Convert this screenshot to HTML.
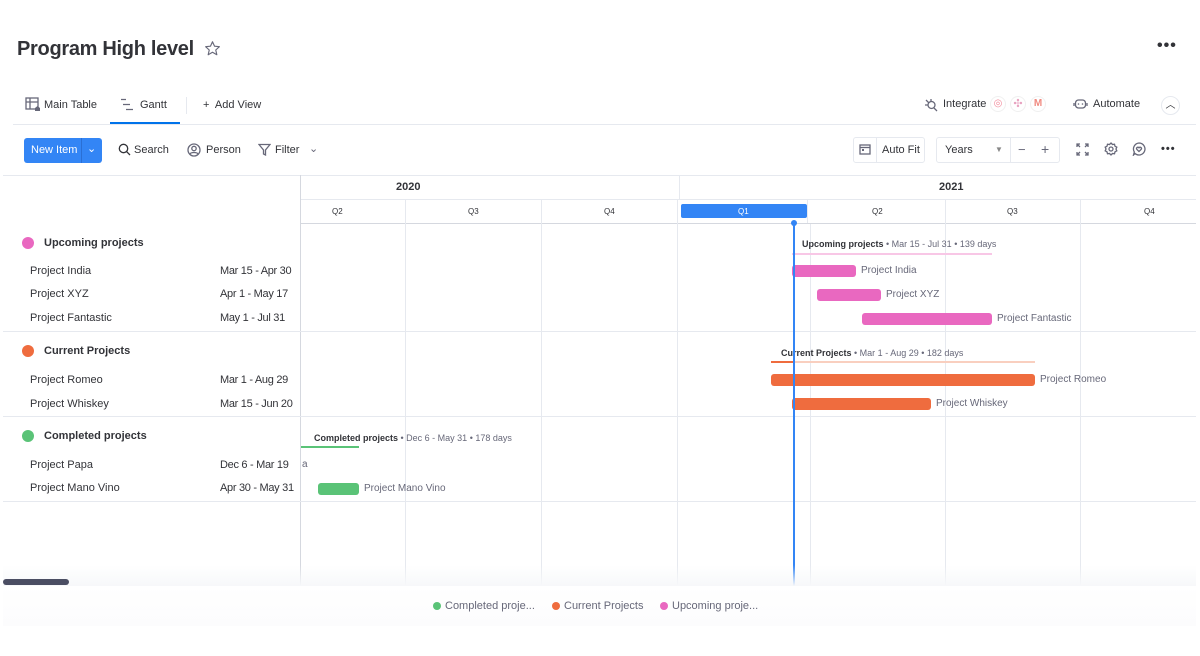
<!DOCTYPE html><html><head><meta charset="utf-8"><style>
*{margin:0;padding:0;box-sizing:border-box}
body{width:1200px;height:656px;background:#fff;font-family:"Liberation Sans",sans-serif;color:#323338;position:relative;overflow:hidden}
.a{position:absolute;white-space:nowrap}
.t{font-size:11px;color:#323338}
.d{letter-spacing:-0.3px}
.g{color:#676879}
.vl{position:absolute;width:1px;background:#e6e9ef}
.hl{position:absolute;height:1px;background:#e6e9ef}
.bar{position:absolute;height:12px;border-radius:3px}
.bl{font-size:10px;color:#676879}
.ic{stroke:#676879;fill:none;stroke-width:1.3}
</style></head><body>
<div class="a" style="left:17px;top:38px;font-size:20px;font-weight:bold;color:#323338;letter-spacing:-0.3px">Program High level</div>
<svg class="a" style="left:204px;top:40px" width="17" height="17" viewBox="0 0 24 24"><path d="M12 2.5l2.9 6.3 6.8.7-5.1 4.6 1.5 6.7L12 17.3l-6.1 3.5 1.5-6.7-5.1-4.6 6.8-.7z" fill="none" stroke="#676879" stroke-width="1.6" stroke-linejoin="round"/></svg>
<div class="a" style="left:1157px;top:37px;font-size:16px;font-weight:bold;letter-spacing:1px;color:#323338">•••</div>

<svg class="a" style="left:25px;top:97px" width="16" height="15" viewBox="0 0 16 15"><rect x="1" y="1" width="12" height="11" class="ic"/><path d="M1 5h12M5 1v11" class="ic"/><path d="M10 14v-3l2.5-2 2.5 2v3z" fill="#676879"/></svg>
<div class="a t" style="left:44px;top:99px">Main Table</div>
<svg class="a" style="left:120px;top:98px" width="14" height="13" viewBox="0 0 14 13"><path d="M1 1.5h5M3 6.5h7M6 11.5h7" class="ic"/></svg>
<div class="a t" style="left:140px;top:99px">Gantt</div>
<div class="a" style="left:110px;top:122px;width:70px;height:2px;background:#0073ea"></div>
<div class="a" style="left:186px;top:97px;width:1px;height:17px;background:#e6e9ef"></div>
<div class="a t" style="left:203px;top:99px">+&nbsp; Add View</div>
<div class="hl" style="left:13px;top:124px;width:1183px"></div>

<svg class="a" style="left:924px;top:98px" width="14" height="14" viewBox="0 0 14 14"><circle cx="7.5" cy="7" r="3.5" class="ic"/><path d="M2 2l3 3M10 10l3 3M1 7h3M7 1v3" class="ic"/></svg>
<div class="a t" style="left:943px;top:98px">Integrate</div>
<div class="a" style="left:990px;top:96px;width:16px;height:16px;border-radius:50%;border:1px solid #f0f0f0;color:#f28b9c;font-size:10px;text-align:center;line-height:14px">◎</div>
<div class="a" style="left:1010px;top:96px;width:16px;height:16px;border-radius:50%;border:1px solid #f0f0f0;color:#e8a3c0;font-size:11px;text-align:center;line-height:14px">✣</div>
<div class="a" style="left:1030px;top:96px;width:16px;height:16px;border-radius:50%;border:1px solid #f0f0f0;color:#f08a80;font-size:10px;text-align:center;line-height:14px;font-weight:bold">M</div>
<svg class="a" style="left:1073px;top:98px" width="15" height="12" viewBox="0 0 15 12"><rect x="2.5" y="2" width="10" height="8" rx="3" class="ic"/><path d="M1 5v3M14 5v3" class="ic"/><circle cx="5.5" cy="6" r=".8" fill="#676879"/><circle cx="9.5" cy="6" r=".8" fill="#676879"/></svg>
<div class="a t" style="left:1093px;top:98px">Automate</div>
<div class="a" style="left:1161px;top:96px;width:19px;height:19px;border-radius:50%;border:1px solid #e6e9ef;font-size:10px;text-align:center;line-height:18px;color:#323338">︿</div>

<div class="a" style="left:24px;top:138px;width:78px;height:25px;border-radius:3px;background:#3385f5"></div>
<div class="a" style="left:31px;top:144px;font-size:11px;color:#fff">New Item</div>
<div class="a" style="left:81px;top:138px;width:1px;height:25px;background:#2a6fd4"></div>
<div class="a" style="left:87px;top:142px;font-size:11px;color:#fff">⌄</div>
<svg class="a" style="left:118px;top:143px" width="13" height="13" viewBox="0 0 13 13"><circle cx="5.5" cy="5.5" r="4.2" stroke="#323338" fill="none" stroke-width="1.3"/><path d="M8.5 8.5l3.5 3.5" stroke="#323338" stroke-width="1.3"/></svg>
<div class="a t" style="left:134px;top:144px">Search</div>
<svg class="a" style="left:187px;top:143px" width="14" height="14" viewBox="0 0 14 14"><circle cx="7" cy="7" r="6" class="ic"/><circle cx="7" cy="5.5" r="2.2" class="ic"/><path d="M3 11c1-2 7-2 8 0" class="ic"/></svg>
<div class="a t" style="left:206px;top:144px">Person</div>
<svg class="a" style="left:258px;top:143px" width="13" height="13" viewBox="0 0 13 13"><path d="M1 1.5h11L7.5 7v5L5.5 11V7z" class="ic"/></svg>
<div class="a t" style="left:275px;top:144px">Filter</div>
<div class="a" style="left:309px;top:142px;font-size:11px;color:#676879">⌄</div>

<div class="a" style="left:853px;top:137px;width:72px;height:26px;border:1px solid #e6e9ef;border-radius:3px"></div>
<div class="a" style="left:876px;top:137px;width:1px;height:26px;background:#e6e9ef"></div>
<svg class="a" style="left:859px;top:143px" width="12" height="12" viewBox="0 0 12 12"><rect x="1" y="2" width="10" height="9" class="ic"/><path d="M1 4.5h10" class="ic"/><rect x="3" y="6" width="2" height="2" fill="#676879"/></svg>
<div class="a t" style="left:882px;top:144px">Auto Fit</div>
<div class="a" style="left:936px;top:137px;width:124px;height:26px;border:1px solid #e6e9ef;border-radius:3px"></div>
<div class="a" style="left:1010px;top:137px;width:1px;height:26px;background:#e6e9ef"></div>
<div class="a t" style="left:945px;top:144px">Years</div>
<div class="a" style="left:995px;top:145px;font-size:8px;color:#888">▼</div>
<div class="a" style="left:1018px;top:142px;font-size:13px;color:#676879">−</div>
<div class="a" style="left:1041px;top:141px;font-size:14px;color:#676879">+</div>
<svg class="a" style="left:1076px;top:143px" width="13" height="13" viewBox="0 0 13 13"><path d="M1 4V1h3M9 1h3v3M12 9v3H9M4 12H1V9M1 1l3 3M12 1L9 4M12 12L9 9M1 12l3-3" class="ic" stroke="#323338"/></svg>
<svg class="a" style="left:1104px;top:142px" width="14" height="14" viewBox="0 0 14 14"><circle cx="7" cy="7" r="2" class="ic"/><path d="M7 1l1.5 1.5 2-.3.5 2 1.8 1L12 7l.8 1.8-1.8 1-.5 2-2-.3L7 13l-1.5-1.5-2 .3-.5-2-1.8-1L2 7l-.8-1.8 1.8-1 .5-2 2 .3z" class="ic"/></svg>
<svg class="a" style="left:1132px;top:142px" width="14" height="14" viewBox="0 0 14 14"><path d="M7 1a6 6 0 1 1-4 10.5L1.5 13l.8-3A6 6 0 0 1 7 1z" class="ic"/><path d="M7 9.5L4.8 7.3a1.3 1.3 0 0 1 2.2-1.5 1.3 1.3 0 0 1 2.2 1.5z" class="ic"/></svg>
<div class="a" style="left:1161px;top:143px;font-size:11px;font-weight:bold;letter-spacing:1px;color:#323338">•••</div>

<div class="hl" style="left:3px;top:175px;width:1193px"></div>
<div class="vl" style="left:300px;top:175px;height:411px;background:#d5d8df"></div>
<div class="hl" style="left:301px;top:199px;width:895px"></div>
<div class="hl" style="left:301px;top:223px;width:895px;background:#d5d8df"></div>
<div class="vl" style="left:679px;top:175px;height:24px"></div>
<div class="a" style="left:396px;top:181px;font-size:11px;font-weight:bold">2020</div>
<div class="a" style="left:939px;top:181px;font-size:11px;font-weight:bold">2021</div>
<div class="a" style="left:681px;top:204px;width:126px;height:14px;background:#3385f5;border-radius:2px"></div>
<div class="a" style="left:332px;top:207px;font-size:8px">Q2</div>
<div class="a" style="left:468px;top:207px;font-size:8px">Q3</div>
<div class="a" style="left:604px;top:207px;font-size:8px">Q4</div>
<div class="a" style="left:738px;top:207px;font-size:8px;color:#fff">Q1</div>
<div class="a" style="left:872px;top:207px;font-size:8px">Q2</div>
<div class="a" style="left:1007px;top:207px;font-size:8px">Q3</div>
<div class="a" style="left:1144px;top:207px;font-size:8px">Q4</div>
<div class="vl" style="left:405px;top:199px;height:387px"></div>
<div class="vl" style="left:541px;top:199px;height:387px"></div>
<div class="vl" style="left:677px;top:199px;height:387px"></div>
<div class="vl" style="left:810px;top:224px;height:362px"></div>
<div class="vl" style="left:807px;top:199px;height:24px"></div>
<div class="vl" style="left:945px;top:199px;height:387px"></div>
<div class="vl" style="left:1080px;top:199px;height:387px"></div>

<div class="hl" style="left:3px;top:331px;width:1193px"></div>
<div class="hl" style="left:3px;top:416px;width:1193px"></div>
<div class="hl" style="left:3px;top:501px;width:1193px"></div>

<div class="a" style="left:22px;top:237px;width:12px;height:12px;border-radius:50%;background:#e968c0"></div>
<div class="a" style="left:44px;top:237px;font-size:11px;font-weight:bold">Upcoming projects</div>
<div class="a t" style="left:30px;top:265px">Project India</div><div class="a t d" style="left:220px;top:265px">Mar 15 - Apr 30</div>
<div class="a t" style="left:30px;top:288px">Project XYZ</div><div class="a t d" style="left:220px;top:288px">Apr 1 - May 17</div>
<div class="a t" style="left:30px;top:312px">Project Fantastic</div><div class="a t d" style="left:220px;top:312px">May 1 - Jul 31</div>
<div class="a" style="left:22px;top:345px;width:12px;height:12px;border-radius:50%;background:#ef6c3e"></div>
<div class="a" style="left:44px;top:345px;font-size:11px;font-weight:bold">Current Projects</div>
<div class="a t" style="left:30px;top:374px">Project Romeo</div><div class="a t d" style="left:220px;top:374px">Mar 1 - Aug 29</div>
<div class="a t" style="left:30px;top:398px">Project Whiskey</div><div class="a t d" style="left:220px;top:398px">Mar 15 - Jun 20</div>
<div class="a" style="left:22px;top:430px;width:12px;height:12px;border-radius:50%;background:#5ac377"></div>
<div class="a" style="left:44px;top:430px;font-size:11px;font-weight:bold">Completed projects</div>
<div class="a t" style="left:30px;top:459px">Project Papa</div><div class="a t d" style="left:220px;top:459px">Dec 6 - Mar 19</div>
<div class="a t" style="left:30px;top:482px">Project Mano Vino</div><div class="a t d" style="left:220px;top:482px">Apr 30 - May 31</div>

<div class="a" style="left:802px;top:239px;font-size:9px;color:#676879"><b style="color:#323338">Upcoming projects</b> • Mar 15 - Jul 31 • 139 days</div>
<div class="a" style="left:792px;top:253px;width:200px;height:2px;background:#f8c7e6"></div>
<div class="bar" style="left:792px;top:265px;width:64px;background:#e968c0"></div><div class="a bl" style="left:861px;top:265px">Project India</div>
<div class="bar" style="left:817px;top:289px;width:64px;background:#e968c0"></div><div class="a bl" style="left:886px;top:289px">Project XYZ</div>
<div class="bar" style="left:862px;top:313px;width:130px;background:#e968c0"></div><div class="a bl" style="left:997px;top:313px">Project Fantastic</div>
<div class="a" style="left:781px;top:348px;font-size:9px;color:#676879"><b style="color:#323338">Current Projects</b> • Mar 1 - Aug 29 • 182 days</div>
<div class="a" style="left:771px;top:361px;width:264px;height:2px;background:#f9cfbf"></div>
<div class="a" style="left:771px;top:361px;width:23px;height:2px;background:#ef6c3e"></div>
<div class="bar" style="left:771px;top:374px;width:264px;background:#ef6c3e"></div><div class="a bl" style="left:1040px;top:374px">Project Romeo</div>
<div class="bar" style="left:792px;top:398px;width:139px;background:#ef6c3e"></div><div class="a bl" style="left:936px;top:398px">Project Whiskey</div>
<div class="a" style="left:314px;top:433px;font-size:9px;color:#676879"><b style="color:#323338">Completed projects</b> • Dec 6 - May 31 • 178 days</div>
<div class="a" style="left:301px;top:446px;width:58px;height:2px;background:#5ac377"></div>
<div class="a bl" style="left:302px;top:459px">a</div>
<div class="bar" style="left:318px;top:483px;width:41px;background:#5ac377"></div><div class="a bl" style="left:364px;top:483px">Project Mano Vino</div>

<div class="a" style="left:793px;top:222px;width:2px;height:364px;background:#3385f5"></div>
<div class="a" style="left:791px;top:220px;width:6px;height:6px;border-radius:50%;background:#3385f5"></div>

<div class="a" style="left:3px;top:565px;width:1193px;height:21px;background:linear-gradient(#fff0,#f7f8fa)"></div>
<div class="a" style="left:3px;top:579px;width:66px;height:6px;border-radius:3px;background:#4b4e63"></div>
<div class="a" style="left:3px;top:586px;width:1193px;height:40px;background:linear-gradient(#fff,#fcfcfd)"></div>
<div class="a" style="left:433px;top:602px;width:8px;height:8px;border-radius:50%;background:#5ac377"></div>
<div class="a t g" style="left:445px;top:600px">Completed proje...</div>
<div class="a" style="left:552px;top:602px;width:8px;height:8px;border-radius:50%;background:#ef6c3e"></div>
<div class="a t g" style="left:564px;top:600px">Current Projects</div>
<div class="a" style="left:660px;top:602px;width:8px;height:8px;border-radius:50%;background:#e968c0"></div>
<div class="a t g" style="left:672px;top:600px">Upcoming proje...</div>
</body></html>
